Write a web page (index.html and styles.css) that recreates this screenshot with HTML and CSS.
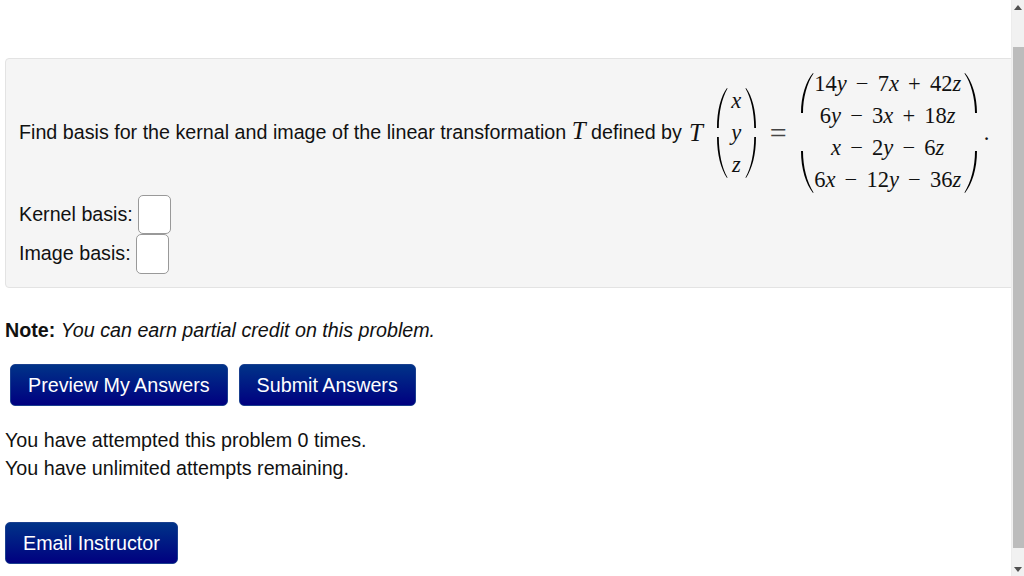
FILE: index.html
```html
<!DOCTYPE html>
<html lang="en">
<head>
    <meta charset="UTF-8">
    <title>Problem</title>
    <link rel="stylesheet" href="styles.css">
</head>
<body>
    <main class="page">
        <div class="problem">
            <div class="statement">
                <span class="sentence">Find basis for the kernal and image of the linear transformation <i class="math-t">T</i> defined by</span>
                <div class="math">
                    <i class="math-t">T</i>
                    <div class="vector">
                        <svg class="paren-small" viewBox="0 0 12 90"><path d="M11 0C5 8 1 22 1 40L2.8 40C2.8 24 6 10 11.5 .5Z"/><path d="M1 49C1 67 5 81 11 90L11.5 89.5C6 80 2.8 65 2.8 49Z"/></svg>
                        <div class="rows rows-small">
                            <i>x</i>
                            <i>y</i>
                            <i>z</i>
                        </div>
                        <svg class="paren-small flip" viewBox="0 0 12 90"><path d="M11 0C5 8 1 22 1 40L2.8 40C2.8 24 6 10 11.5 .5Z"/><path d="M1 49C1 67 5 81 11 90L11.5 89.5C6 80 2.8 65 2.8 49Z"/></svg>
                    </div>
                    <span class="equals">=</span>
                    <div class="vector">
                        <svg class="paren-large" viewBox="0 0 14 122"><path d="M13 1C6 9 1 24 1 41L3 41C3 26 7 11 13.5 1.5Z"/><path d="M1 79C1 97 6 112 13 121L13.5 120.5C7 110 3 95 3 79Z"/></svg>
                        <div class="rows rows-large">
                            <span>14<i>y</i> − 7<i>x</i> + 42<i>z</i></span>
                            <span>6<i>y</i> − 3<i>x</i> + 18<i>z</i></span>
                            <span><i>x</i> − 2<i>y</i> − 6<i>z</i></span>
                            <span>6<i>x</i> − 12<i>y</i> − 36<i>z</i></span>
                        </div>
                        <svg class="paren-large flip" viewBox="0 0 14 122"><path d="M13 1C6 9 1 24 1 41L3 41C3 26 7 11 13.5 1.5Z"/><path d="M1 79C1 97 6 112 13 121L13.5 120.5C7 110 3 95 3 79Z"/></svg>
                    </div>
                    <span class="period">.</span>
                </div>
            </div>
            <div class="answer">Kernel basis: <input class="answer-box" type="text"></div>
            <div class="answer">Image basis: <input class="answer-box" type="text"></div>
        </div>

        <p class="note"><strong>Note:</strong> <em>You can earn partial credit on this problem.</em></p>

        <div class="actions">
            <button class="btn">Preview My Answers</button>
            <button class="btn">Submit Answers</button>
        </div>

        <p class="attempts">You have attempted this problem 0 times.<br>You have unlimited attempts remaining.</p>

        <button class="btn">Email Instructor</button>
    </main>

    <div class="scrollbar">
        <span class="arrow-up"></span>
        <div class="thumb"></div>
        <span class="arrow-down"></span>
    </div>
</body>
</html>
```

FILE: styles.css
```css
* {
    box-sizing: border-box;
}

html, body {
    height: 100%;
    margin: 0;
    overflow: hidden;
}

body {
    display: flex;
    font-family: "Liberation Sans", Arial, sans-serif;
    font-size: 19.7px;
    color: #111;
    background: #fff;
}

.page {
    flex: 1;
    min-width: 0;
    overflow: hidden;
    padding: 58px 0 0 5px;
}

.problem {
    margin-right: -12px;
    height: 230px;
    padding: 13px 14px 0 13px;
    background: #f5f5f5;
    border: 1px solid #e3e3e3;
    border-radius: 4px;
}

.statement {
    display: flex;
    align-items: center;
    height: 122px;
    margin-bottom: 1px;
    white-space: nowrap;
}

.sentence {
    padding-bottom: 2px;
}

.math {
    display: flex;
    align-items: center;
    margin-left: 7px;
    font-family: "Liberation Serif", serif;
    font-size: 22.5px;
    color: #111;
}

.math-t {
    font-family: "Liberation Serif", serif;
    font-size: 25px;
    line-height: 20px;
}

.vector {
    display: flex;
    align-items: center;
}

.rows {
    display: flex;
    flex-direction: column;
    align-items: center;
    line-height: 32px;
}

.rows-small {
    width: 17px;
}

.rows-large {
    width: 150px;
    padding: 0 2px 2px 0;
    word-spacing: 3.5px;
}

.paren-small {
    width: 12px;
    height: 90px;
    margin-left: 13px;
}

.paren-small.flip {
    margin-left: 0;
    transform: scaleX(-1);
}

.paren-large {
    width: 14px;
    height: 122px;
}

.paren-large.flip {
    transform: scaleX(-1);
}

.equals {
    margin: 0 13px 0 13px;
    font-size: 30px;
    line-height: 30px;
    color: #444;
}

.period {
    margin-left: 6px;
}

.answer {
    display: flex;
    align-items: center;
    gap: 5px;
    height: 39px;
}

.answer-box {
    width: 33px;
    height: 39px;
    padding: 0;
    background: #fff;
    border: 1px solid #999;
    border-radius: 5px;
}

.answer + .answer .answer-box {
    height: 40px;
}

.note {
    margin: 28px 0 0;
    line-height: 28px;
}

.actions {
    display: flex;
    gap: 11px;
    margin: 20px 0 20px 5px;
}

.btn {
    height: 42px;
    padding: 0 17px;
    font-family: "Liberation Sans", Arial, sans-serif;
    font-size: 19.7px;
    color: #fff;
    background: linear-gradient(#003388, #000080);
    border: 1px solid #1a3f8f;
    border-radius: 5px;
}

.attempts {
    margin: 0 0 40px;
    line-height: 28px;
}

.scrollbar {
    flex: none;
    display: flex;
    flex-direction: column;
    align-items: center;
    width: 13px;
    background: #f1f1f1;
    border-left: 1px solid #ececec;
}

.thumb {
    flex: none;
    width: 11px;
    height: 501px;
    margin: 37px 0 19px;
    background: #bcbcbc;
}

.arrow-up,
.arrow-down {
    flex: none;
    width: 0;
    height: 0;
    border-left: 4px solid transparent;
    border-right: 4px solid transparent;
}

.arrow-up {
    margin-top: 5px;
    border-bottom: 5px solid #505050;
}

.arrow-down {
    border-top: 5px solid #505050;
}
```
